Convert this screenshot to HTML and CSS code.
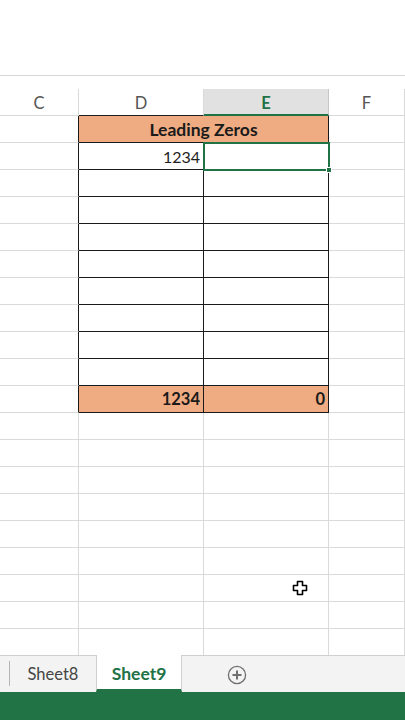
FILE: index.html
```html
<!DOCTYPE html>
<html>
<head>
<meta charset="utf-8">
<link rel="stylesheet" href="styles.css">
</head>
<body>
<div class="page">
  <div class="ribbon"></div>
  <div class="gap"></div>
  <div class="sheet">
    <div class="grid">
      <div class="hd">C</div>
      <div class="hd hd-d">D</div>
      <div class="hd hd-e">E</div>
      <div class="hd">F</div>

      <div class="c edge"></div><div class="c t title span2">Leading Zeros</div><div class="c"></div>
      <div class="c edge"></div><div class="c t num">1234</div><div class="c t"></div><div class="c"></div>
      <div class="c edge"></div><div class="c t"></div><div class="c t"></div><div class="c"></div>
      <div class="c edge"></div><div class="c t"></div><div class="c t"></div><div class="c"></div>
      <div class="c edge"></div><div class="c t"></div><div class="c t"></div><div class="c"></div>
      <div class="c edge"></div><div class="c t"></div><div class="c t"></div><div class="c"></div>
      <div class="c edge"></div><div class="c t"></div><div class="c t"></div><div class="c"></div>
      <div class="c edge"></div><div class="c t"></div><div class="c t"></div><div class="c"></div>
      <div class="c edge"></div><div class="c t"></div><div class="c t"></div><div class="c"></div>
      <div class="c edge"></div><div class="c t"></div><div class="c t"></div><div class="c"></div>
      <div class="c edge"></div><div class="c t total num">1234</div><div class="c t total num">0</div><div class="c"></div>

      <div class="c"></div><div class="c"></div><div class="c"></div><div class="c"></div>
      <div class="c"></div><div class="c"></div><div class="c"></div><div class="c"></div>
      <div class="c"></div><div class="c"></div><div class="c"></div><div class="c"></div>
      <div class="c"></div><div class="c"></div><div class="c"></div><div class="c"></div>
      <div class="c"></div><div class="c"></div><div class="c"></div><div class="c"></div>
      <div class="c"></div><div class="c"></div><div class="c"></div><div class="c"></div>
      <div class="c"></div><div class="c"></div><div class="c"></div><div class="c"></div>
      <div class="c"></div><div class="c"></div><div class="c"></div><div class="c"></div>
      <div class="c"></div><div class="c"></div><div class="c"></div><div class="c"></div>
    </div>
    <div class="selection"><span class="handle"></span></div>
    <svg class="cursor" width="16" height="16" viewBox="0 0 16 16">
      <path d="M5.5 1.5 H10.5 V5.5 H14.5 V10.5 H10.5 V14.5 H5.5 V10.5 H1.5 V5.5 H5.5 Z" fill="#fff" stroke="#000" stroke-width="1.6" stroke-linejoin="round"/>
    </svg>
  </div>
  <div class="tabs">
    <span class="tab-sep"></span>
    <div class="tab">Sheet8</div>
    <div class="tab active">Sheet9</div>
    <div class="add">
      <svg width="20" height="20" viewBox="0 0 20 20">
        <circle cx="10" cy="10" r="8.6" fill="none" stroke="#6f6f6f" stroke-width="1.3"/>
        <path d="M10 5.5 V14.5 M5.5 10 H14.5" stroke="#6f6f6f" stroke-width="2"/>
      </svg>
    </div>
  </div>
  <div class="status"></div>
</div>
</body>
</html>
```
FILE: styles.css
```css
* { box-sizing: border-box; }
html, body { margin: 0; padding: 0; background: #fff; }
body { font-family: Lato, "Open Sans", "Liberation Sans", sans-serif; }
.page { width: 405px; height: 720px; display: flex; flex-direction: column; overflow: hidden; }
.ribbon { height: 76px; border-bottom: 1px solid #d6d6d6; flex: none; }
.gap { height: 13px; flex: none; }
.sheet { flex: 1 1 0; min-height: 0; position: relative; overflow: hidden; }
.grid {
  display: grid;
  grid-template-columns: 79px 125px 125px 76px;
  grid-auto-rows: 27px;
}
.hd {
  display: flex; align-items: center; justify-content: center;
  font-size: 16.5px; color: #555; padding-top: 2px;
  border-right: 1px solid #d9d9d9;
  border-bottom: 1px solid #d9d9d9;
}
.hd-d { border-bottom-color: #1f1f1f; }
.hd-e { background: #e1e1e1; color: #217346; font-weight: 700; border-bottom: 2px solid #217346; border-right-color: #c6c6c6; }
.c {
  border-right: 1px solid #dadada;
  border-bottom: 1px solid #dadada;
  font-size: 16px; color: #1e1e1e;
  display: flex; align-items: center;
}
.edge { border-right-color: #1a1a1a; }
.t { border-right-color: #1a1a1a; border-bottom-color: #1a1a1a; }
.span2 { grid-column: span 2; }
.title { background: #efab82; font-weight: 700; justify-content: center; font-size: 17.5px; color: #1a1a1a; }
.num { justify-content: flex-end; padding-right: 3px; }
.total { background: #efab82; font-weight: 700; font-size: 16.5px; color: #1a1a1a; }
.selection {
  position: absolute; left: 203px; top: 53px; width: 127px; height: 29px;
  border: 2px solid #217346;
}
.handle {
  position: absolute; right: -4px; bottom: -4px; width: 6px; height: 6px;
  background: #217346; border: 1px solid #fff;
}
.cursor { position: absolute; left: 292px; top: 491px; }
.tabs {
  height: 37px; flex: none; background: #f3f3f3;
  border-top: 1px solid #cfcfcf;
  display: flex; align-items: stretch; position: relative;
}
.tab-sep { width: 1px; background: #b5b5b5; margin: 5px 0 6px 9px; }
.tab { width: 86px; display: flex; align-items: center; justify-content: center; font-size: 16.5px; color: #444; }
.tab.active {
  background: #fff; color: #217346; font-weight: 700; font-size: 17.5px;
  border-left: 1px solid #cfcfcf; border-right: 1px solid #cfcfcf;
  border-bottom: 3px solid #217346; margin-top: -1px; padding-top: 2px;
}
.add { display: flex; align-items: center; margin-left: 45px; padding-top: 1px; }
.status { height: 28px; flex: none; background: #217346; }
```
